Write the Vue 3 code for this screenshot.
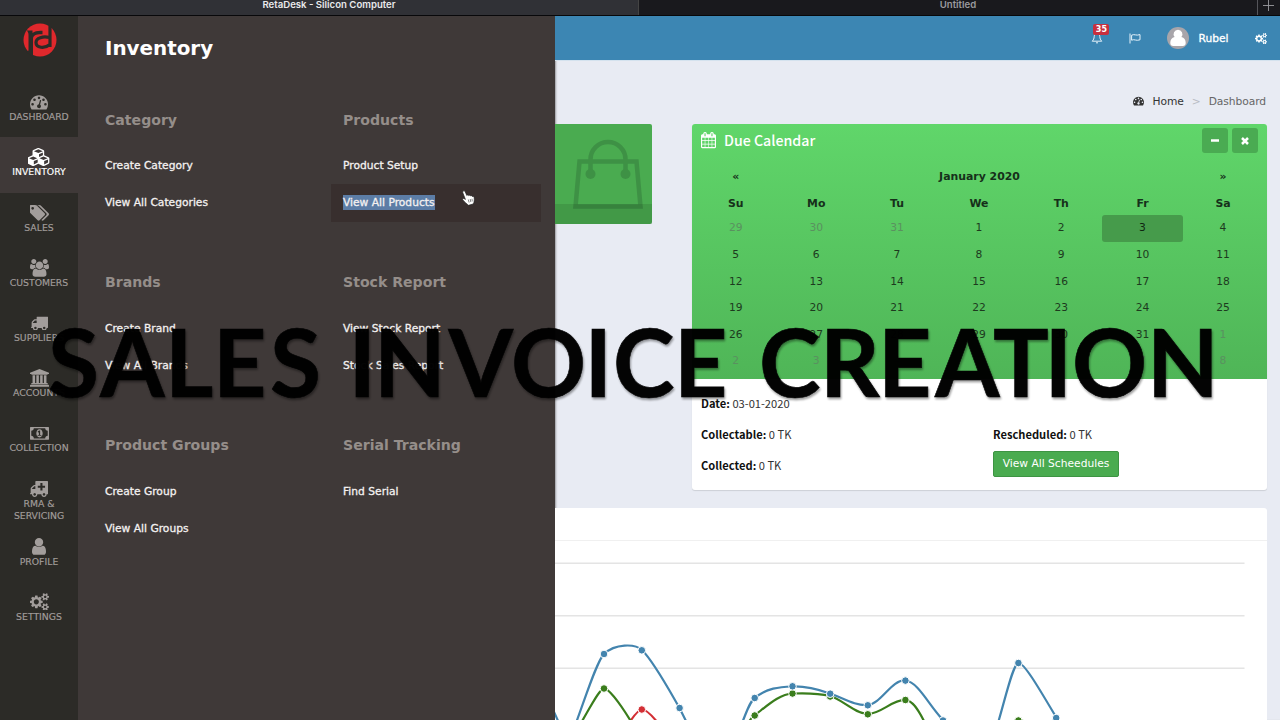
<template>
    <div class="screen">
        <!-- Browser tabs -->
        <div class="tabs">
            <div class="tab tab-active">RetaDesk - Silicon Computer</div>
            <div class="tab">Untitled</div>
            <div class="tab-add">
                <svg viewBox="0 0 12 12"><path d="M6 0v12M0 6h12" /></svg>
            </div>
        </div>

        <div class="app">
            <!-- Sidebar -->
            <aside class="sidebar">
                <div class="logo">
                    <svg viewBox="0 0 34 34">
                        <circle cx="17" cy="17" r="16.500" fill="#e0282c" />
                        <path
                            d="M3.500 7.500h6v2.500c2.500-2 5.500-2.600 10-2.300v3.600c-6-.3-9.500 1-9.500 4.700V34L3.500 29l2-1.500V12c0-2-.5-3.500-2-4.500z"
                            fill="#2c2b27"
                        />
                        <path
                            d="M27 3v21M26.500 14.500c-6.500-1.500-13.500.3-13.500 5 0 5.500 8.500 6.500 14 2"
                            fill="none"
                            stroke="#2c2b27"
                            stroke-width="3.200"
                        />
                    </svg>
                </div>
                <nav>
                    <a
                        v-for="item in menu"
                        :key="item.label"
                        class="nav-item"
                        :class="{ active: item.active, tall: item.tall }"
                    >
                        <span class="nav-icon">
                            <svg
                                :viewBox="icons[item.icon].box"
                                :style="{ width: item.w + 'px' }"
                            >
                                <path :d="icons[item.icon].d" />
                            </svg>
                        </span>
                        <span class="nav-label">{{ item.label }}</span>
                    </a>
                </nav>
            </aside>

            <!-- Inventory submenu -->
            <section class="panel">
                <h1>Inventory</h1>
                <div class="groups">
                    <div v-for="group in groups" :key="group.title" class="group">
                        <h2>{{ group.title }}</h2>
                        <a
                            v-for="link in group.links"
                            :key="link"
                            class="link"
                            :class="{ hovered: link === hovered }"
                        >
                            <span>{{ link }}</span>
                        </a>
                    </div>
                </div>
            </section>

            <!-- Main content -->
            <main class="main">
                <header class="topbar">
                    <span class="bell">
                        <svg viewBox="0 0 12 12">
                            <path d="M1.200 9.200h9.600C9.300 7.800 9 6.500 8.800 4.500 8.600 2.600 7.600 1.400 6 1.400S3.400 2.600 3.200 4.500C3 6.500 2.700 7.800 1.200 9.200zM5 10.800h2M6 .3v1" />
                        </svg>
                        <b>35</b>
                    </span>
                    <span class="flag">
                        <svg viewBox="0 0 12 11">
                            <path d="M1 .5v10M2.600 2.200c3-1.600 4.300.9 8.400-.6v5.200c-4.100 1.500-5.400-1.100-8.400.4z" />
                        </svg>
                    </span>
                    <span class="avatar">
                        <svg viewBox="0 0 22 22">
                            <circle cx="11" cy="11" r="11" fill="#a8a5aa" />
                            <path
                                d="M11 2.800a4.400 4.400 0 0 1 3.400 7.200c2.800.7 4.300 2.800 4.300 6 0 2-1 3-3 3H6.300c-2 0-3-1-3-3 0-3.200 1.500-5.300 4.300-6A4.400 4.400 0 0 1 11 2.800z"
                                fill="#fff"
                            />
                        </svg>
                    </span>
                    <span class="user">Rubel</span>
                    <svg class="cogs" :viewBox="icons.cogs.box">
                        <path :d="icons.cogs.d" />
                    </svg>
                </header>

                <div class="breadcrumb">
                    <svg :viewBox="icons.dashboard.box"><path :d="icons.dashboard.d" /></svg>
                    <span class="home">Home</span>
                    <span class="sep">&gt;</span>
                    <span>Dashboard</span>
                </div>

                <div class="row">
                    <div class="tile">
                        <svg viewBox="0 0 70 72">
                            <path d="M6.500 22.500h57l4 45h-65zM17.500 34V20.500a17.500 17.500 0 0 1 35 0V34" />
                            <circle cx="17.500" cy="35" r="5" />
                            <circle cx="52.500" cy="35" r="5" />
                        </svg>
                        <div class="tile-foot"></div>
                    </div>

                    <div class="card">
                        <div class="calendar">
                            <div class="cal-head">
                                <svg :viewBox="icons.calendar.box">
                                    <path :d="icons.calendar.d" />
                                </svg>
                                <span class="cal-title">Due Calendar</span>
                                <button>
                                    <svg viewBox="0 0 10 10"><path d="M1 4.500h8" /></svg>
                                </button>
                                <button>
                                    <svg viewBox="0 0 10 10"><path d="M2 2l6 6M8 2l-6 6" /></svg>
                                </button>
                            </div>
                            <div class="cal-grid">
                                <b>«</b>
                                <b class="month">January 2020</b>
                                <b>»</b>
                                <b v-for="d in weekdays" :key="d">{{ d }}</b>
                                <span
                                    v-for="(day, i) in days"
                                    :key="i"
                                    :class="{ muted: day.muted, today: day.today }"
                                    >{{ day.n }}</span
                                >
                            </div>
                        </div>
                        <div class="details">
                            <div class="full"><b>Date:</b> 03-01-2020</div>
                            <div><b>Collectable:</b> 0 TK</div>
                            <div><b>Rescheduled:</b> 0 TK</div>
                            <div><b>Collected:</b> 0 TK</div>
                            <a class="btn">View All Scheedules</a>
                        </div>
                    </div>
                </div>

                <div class="chart-card">
                    <div class="chart-head"></div>
                    <svg class="chart" viewBox="555 542 712 178">
                        <g class="grid-lines">
                            <path d="M555 563.300h689.500M555 615.800h689.500M555 668.300h689.500" />
                        </g>
                        <g v-for="line in series" :key="line.color">
                            <path :d="line.d" :stroke="line.color" fill="none" stroke-width="2.200" />
                            <circle
                                v-for="p in line.points"
                                :key="p[0]"
                                :cx="p[0]"
                                :cy="p[1]"
                                r="3.800"
                                :fill="line.color"
                                stroke="#fff"
                                stroke-width="1"
                            />
                        </g>
                    </svg>
                </div>
            </main>
        </div>

        <!-- Hand pointer -->
        <svg class="pointer" viewBox="0 0 13 16">
            <path
                d="M1 1.200c.9-.8 1.900-.2 2.300.8l1.500 3.500c.6-.8 1.500-.6 1.900.1.600-.6 1.500-.4 1.900.3.700-.5 1.600-.2 1.800.6 1-.3 1.700.2 1.800 1.200.2 2.300.1 4.500-1 6.300L6.500 15.300C5 14 2.500 12 .8 9.900c-.6-1 .4-1.900 1.600-1.100l1 .6L.8 2.800C.6 2.200.6 1.600 1 1.200z"
                fill="#fff"
                stroke="#222"
                stroke-width=".7"
            />
            <path d="M6.300 9.500l.8 3M8.200 9l.6 3M10 8.800l.3 2.600" stroke="#333" stroke-width=".6" />
        </svg>

        <!-- Video caption -->
        <svg class="caption" viewBox="0 0 1280 720">
            <text y="397" :x="captionX">SALES INVOICE CREATION</text>
        </svg>
    </div>
</template>

<script setup>
const icons = {
    dashboard: {
        box: "0 128 1792 1536",
        d: "M384 1152q0-53-37.500-90.500t-90.500-37.500-90.500 37.500-37.500 90.500 37.500 90.500 90.500 37.500 90.500-37.500 37.500-90.500zm192-448q0-53-37.500-90.500t-90.500-37.500-90.500 37.500-37.500 90.500 37.500 90.500 90.500 37.500 90.500-37.500 37.500-90.500zm428 481l101-382q6-26-7.500-48.500t-38.500-29.500-48 6.500-30 39.500l-101 382q-60 5-107 43.500t-63 98.500q-20 77 20 146t117 89 146-20 89-117q16-60-6-117t-72-91zm660-33q0-53-37.500-90.500t-90.500-37.500-90.500 37.500-37.500 90.500 37.500 90.500 90.500 37.500 90.500-37.500 37.500-90.500zm-640-640q0-53-37.500-90.500t-90.500-37.500-90.500 37.500-37.500 90.500 37.500 90.500 90.500 37.500 90.500-37.500 37.500-90.500zm448 192q0-53-37.500-90.500t-90.500-37.500-90.500 37.500-37.500 90.500 37.500 90.500 90.500 37.500 90.500-37.500 37.500-90.500zm320 448q0 261-141 483-19 29-54 29h-1402q-35 0-54-29-141-221-141-483 0-182 71-348t191-286 286-191 348-71 348 71 286 191 191 286 71 348z",
    },
    cubes: {
        box: "0 0 2176 1792",
        d: "M576 1632l384-192v-314l-384 164v342zm-64-454l404-173-404-173-404 173zm1088 454l384-192v-314l-384 164v342zm-64-454l404-173-404-173-404 173zm-448-293l384-165v-266l-384 164v267zm-64-379l441-189-441-189-441 189zm1088 518v416q0 36-19 67t-52 47l-448 224q-25 14-57 14t-57-14l-448-224q-4-2-7-4-2 2-7 4l-448 224q-25 14-57 14t-57-14l-448-224q-33-16-52-47t-19-67v-416q0-38 21.500-70t56.500-48l434-186v-400q0-38 21.500-70t56.500-48l448-192q23-10 50-10t50 10l448 192q35 16 56.500 48t21.500 70v400l434 186q36 16 57 48t21 70z",
    },
    tags: {
        box: "0 128 1835 1536",
        d: "M384 448q0-53-37.500-90.500t-90.500-37.500-90.500 37.500-37.500 90.500 37.500 90.500 90.500 37.500 90.500-37.500 37.500-90.500zm1067 576q0 53-37 90l-491 492q-39 37-91 37-53 0-90-37l-715-716q-38-37-64.500-101t-26.500-117v-416q0-52 38-90t90-38h416q53 0 117 26.500t102 64.500l715 714q37 39 37 91zm384 0q0 53-37 90l-491 492q-39 37-91 37-36 0-59-14t-53-45l470-470q37-37 37-90 0-52-37-91l-715-714q-38-38-102-64.500t-117-26.500h224q53 0 117 26.500t102 64.500l715 714q37 39 37 91z",
    },
    users: {
        box: "0 0 1920 1792",
        d: "M593 896q-162 5-265 128h-134q-82 0-138-40.500t-56-118.500q0-353 124-353 6 0 43.500 21t97.500 42.500 119 21.500q67 0 133-23-5 37-5 66 0 139 81 256zm1071 637q0 120-73 189.500t-194 69.500h-874q-121 0-194-69.500t-73-189.500q0-53 3.500-103.500t14-109 26.500-108.500 43-97.500 62-81 85.500-53.500 111.500-20q10 0 43 21.500t73 48 107 48 135 21.500 135-21.500 107-48 73-48 43-21.500q61 0 111.500 20t85.500 53.500 62 81 43 97.500 26.500 108.500 14 109 3.500 103.500zm-1024-1277q0 106-75 181t-181 75-181-75-75-181 75-181 181-75 181 75 75 181zm704 384q0 159-112.500 271.500t-271.500 112.500-271.500-112.500-112.500-271.500 112.500-271.500 271.500-112.500 271.500 112.500 112.500 271.500zm576 225q0 78-56 118.500t-138 40.500h-134q-103-123-265-128 81-117 81-256 0-29-5-66 66 23 133 23 59 0 119-21.500t97.500-42.500 43.500-21q124 0 124 353zm-128-609q0 106-75 181t-181 75-181-75-75-181 75-181 181-75 181 75 75 181z",
    },
    truck: {
        box: "64 192 1728 1472",
        d: "M640 1408q0-52-38-90t-90-38-90 38-38 90 38 90 90 38 90-38 38-90zm-384-512h384v-256h-158q-13 0-22 9l-195 195q-9 9-9 22v30zm1280 512q0-52-38-90t-90-38-90 38-38 90 38 90 90 38 90-38 38-90zm256-1088v1024q0 15-4 26.500t-13.500 18.500-16.500 11.500-23.500 6-22.500 2-25.500 0-22.500-.5q0 106-75 181t-181 75-181-75-75-181h-384q0 106-75 181t-181 75-181-75-75-181h-64q-3 0-22.500.5t-25.500 0-22.500-2-23.500-6-16.500-11.500-13.500-18.500-4-26.500q0-26 19-45t45-19v-320q0-8-.5-35t0-38 2.500-34.500 6.500-37 14-30.500 22.500-30l198-198q19-19 50.500-32t58.500-13h160v-192q0-26 19-45t45-19h1024q26 0 45 19t19 45z",
    },
    bank: {
        box: "0 0 1920 1792",
        d: "M960 0l960 384v128h-128q0 26-20.500 45t-48.500 19h-1526q-28 0-48.500-19t-20.500-45h-128v-128zm-704 640h256v768h128v-768h256v768h128v-768h256v768h128v-768h256v768h59q28 0 48.500 19t20.500 45v64h-1664v-64q0-26 20.500-45t48.500-19h59v-768zm1595 960q28 0 48.500 19t20.500 45v128h-1920v-128q0-26 20.500-45t48.500-19h1782z",
    },
    money: {
        box: "0 256 1920 1280",
        d: "M768 1152h384v-96h-128v-448h-114l-148 137 77 80q42-37 55-57h2v288h-128v96zm512-256q0 70-21 142t-59.500 134-101.500 101-138 39-138-39-101.500-101-59.500-134-21-142 21-142 59.500-134 101.500-101 138-39 138 39 101.500 101 59.500 134 21 142zm512 256v-512q-106 0-181-75t-75-181h-1152q0 106-75 181t-181 75v512q106 0 181 75t75 181h1152q0-106 75-181t181-75zm128-832v1152q0 26-19 45t-45 19h-1792q-26 0-45-19t-19-45v-1152q0-26 19-45t45-19h1792q26 0 45 19t19 45z",
    },
    ambulance: {
        box: "64 128 1728 1536",
        d: "M640 1408q0-52-38-90t-90-38-90 38-38 90 38 90 90 38 90-38 38-90zm-384-512h320v-256h-94q-13 0-22 9l-195 195q-9 9-9 22v30zm1280 512q0-52-38-90t-90-38-90 38-38 90 38 90 90 38 90-38 38-90zm256-1216v1152q0 15-4 26.500t-13.500 18.500-16.500 11.500-23.500 6-22.500 2-25.500 0-22.500-.5q0 106-75 181t-181 75-181-75-75-181h-384q0 106-75 181t-181 75-181-75-75-181h-64q-3 0-22.500.5t-25.500 0-22.500-2-23.500-6-16.500-11.500-13.500-18.500-4-26.500q0-26 19-45t45-19v-320q0-8-.5-35t0-38 2.500-34.500 6.500-37 14-30.500 22.500-30l198-198q19-19 50.500-32t58.500-13h96v-320q0-26 19-45t45-19h1088q26 0 45 19t19 45zM1060 330h200v250h250v200h-250v250h-200v-250h-250v-200h250z",
    },
    user: {
        box: "256 128 1280 1536",
        d: "M1536 1399q0 109-62.500 187t-150.500 78h-854q-88 0-150.500-78t-62.500-187q0-85 8.500-160.500t31.500-152 58.500-131 94-89 134.500-34.500q131 128 313 128t313-128q76 0 134.500 34.500t94 89 58.500 131 31.500 152 8.500 160.500zm-256-887q0 159-112.500 271.500t-271.500 112.500-271.500-112.500-112.500-271.500 112.500-271.500 271.500-112.500 271.500 112.500 112.500 271.500z",
    },
    cogs: {
        box: "0 128 1920 1760",
        d: "M896 1024q0-106-75-181t-181-75-181 75-75 181 75 181 181 75 181-75 75-181zm768 512q0-52-38-90t-90-38-90 38-38 90q0 53 37.500 90.500t90.500 37.500 90.500-37.500 37.500-90.500zm0-1024q0-52-38-90t-90-38-90 38-38 90q0 53 37.500 90.500t90.500 37.500 90.500-37.500 37.500-90.500zm-384 421v185q0 10-7 19.500t-16 10.500l-155 24q-11 35-32 76 34 48 90 115 7 11 7 20 0 12-7 19-23 30-82.500 89.500t-78.500 59.500q-11 0-21-7l-115-90q-37 19-77 31-11 108-23 155-7 24-30 24h-186q-11 0-20-7.500t-10-17.500l-23-153q-34-10-75-31l-118 89q-7 7-20 7-11 0-21-8-144-133-144-160 0-9 7-19 10-14 41-53t47-61q-23-44-35-82l-152-24q-10-1-17-9.500t-7-19.500v-185q0-10 7-19.500t16-10.500l155-24q11-35 32-76-34-48-90-115-7-11-7-20 0-12 7-20 22-30 82-89t79-59q11 0 21 7l115 90q34-18 77-32 11-108 23-154 7-24 30-24h186q11 0 20 7.500t10 17.500l23 153q34 10 75 31l118-89q8-7 20-7 11 0 21 8 144 133 144 160 0 8-7 19-12 16-42 54t-45 60q23 48 34 82l152 23q10 2 17 10.500t7 19.500zm640 533v140q0 16-149 31-12 27-30 52 51 113 51 138 0 4-4 7-122 71-124 71-8 0-46-47t-52-68q-20 2-30 2t-30-2q-14 21-52 68t-46 47q-2 0-124-71-4-3-4-7 0-25 51-138-18-25-30-52-149-15-149-31v-140q0-16 149-31 13-29 30-52-51-113-51-138 0-4 4-7 4-2 35-20t59-34 30-16q8 0 46 46.500t52 67.500q20-2 30-2t30 2q51-71 92-112l6-2q4 0 124 70 4 3 4 7 0 25-51 138 17 23 30 52 149 15 149 31zm0-1024v140q0 16-149 31-12 27-30 52 51 113 51 138 0 4-4 7-122 71-124 71-8 0-46-47t-52-68q-20 2-30 2t-30-2q-14 21-52 68t-46 47q-2 0-124-71-4-3-4-7 0-25 51-138-18-25-30-52-149-15-149-31v-140q0-16 149-31 13-29 30-52-51-113-51-138 0-4 4-7 4-2 35-20t59-34 30-16q8 0 46 46.500t52 67.500q20-2 30-2t30 2q51-71 92-112l6-2q4 0 124 70 4 3 4 7 0 25-51 138 17 23 30 52 149 15 149 31z",
    },
    calendar: {
        box: "64 0 1664 1792",
        d: "M192 1664h288v-288h-288v288zm352 0h320v-288h-320v288zm-352-352h288v-320h-288v320zm352 0h320v-320h-320v320zm-352-384h288v-288h-288v288zm736 736h320v-288h-320v288zm-384-736h320v-288h-320v288zm768 736h288v-288h-288v288zm-384-352h320v-320h-320v320zm-352-864v-288q0-13-9.500-22.500t-22.500-9.500h-64q-13 0-22.500 9.500t-9.500 22.500v288q0 13 9.500 22.500t22.500 9.500h64q13 0 22.500-9.500t9.500-22.500zm736 864h288v-320h-288v320zm-384-384h320v-288h-320v288zm384 0h288v-288h-288v288zm32-480v-288q0-13-9.500-22.500t-22.500-9.500h-64q-13 0-22.500 9.500t-9.500 22.500v288q0 13 9.500 22.500t22.500 9.500h64q13 0 22.500-9.500t9.500-22.500zm384-64v1280q0 52-38 90t-90 38h-1408q-52 0-90-38t-38-90v-1280q0-52 38-90t90-38h128v-96q0-66 47-113t113-47h64q66 0 113 47t47 113v96h384v-96q0-66 47-113t113-47h64q66 0 113 47t47 113v96h128q52 0 90 38t38 90z",
    },
};

const menu = [
    { label: "DASHBOARD", icon: "dashboard", w: 18 },
    { label: "INVENTORY", icon: "cubes", w: 22, active: true },
    { label: "SALES", icon: "tags", w: 19 },
    { label: "CUSTOMERS", icon: "users", w: 19 },
    { label: "SUPPLIERS", icon: "truck", w: 17 },
    { label: "ACCOUNTS", icon: "bank", w: 19 },
    { label: "COLLECTION", icon: "money", w: 19 },
    { label: "RMA & SERVICING", icon: "ambulance", w: 18, tall: true },
    { label: "PROFILE", icon: "user", w: 14 },
    { label: "SETTINGS", icon: "cogs", w: 19 },
];

const hovered = "View All Products";
const groups = [
    { title: "Category", links: ["Create Category", "View All Categories"] },
    { title: "Products", links: ["Product Setup", "View All Products"] },
    { title: "Brands", links: ["Create Brand", "View All Brands"] },
    { title: "Stock Report", links: ["View Stock Report", "Stock Sales Report"] },
    { title: "Product Groups", links: ["Create Group", "View All Groups"] },
    { title: "Serial Tracking", links: ["Find Serial"] },
];

const weekdays = ["Su", "Mo", "Tu", "We", "Th", "Fr", "Sa"];

// six weeks starting on Sunday 29 December 2019
const days = Array.from({ length: 42 }, (_, i) => {
    if (i < 3) return { n: 29 + i, muted: true };
    if (i > 33) return { n: i - 33, muted: true };
    return { n: i - 2, today: i === 5 };
});

const series = [
    {
        color: "#d32f35",
        d: "M629 723C635 714 639 709.500 642 709.500S650 713 658 723",
        points: [[641.8, 709.5]],
    },
    {
        color: "#3a7d1c",
        d: "M581 723C592 704 600 688.500 604 688.500S618 700 632 723M748 723C752 717 754 715 755 715C768 705 780 694 792.500 693.500S818 693 830 696S855 714 868 714S893 699 905.500 700C912 700 918 709 925 723M1010 723C1014 720 1022 719 1027 723",
        points: [
            [604, 688.5],
            [754.7, 715.5],
            [792.5, 693.5],
            [830.2, 696.5],
            [867.8, 714.3],
            [905.4, 700],
            [1018.4, 720.5],
        ],
    },
    {
        color: "#4384ae",
        d: "M554 712L559 723M576 723C586 696 597 661 604 654C615 643.500 635 643.500 642 650C654 662 668 688 679.500 708L687 723M742 723C747 711 750 701 755 698C766 688 780 687 792.500 686.500S817 689 830 693.500S855 706 868 705S892 679 905.500 680.500S930 708 946 723M998 723C1006 696 1013 664 1018.400 663S1040 690 1056 717L1060 723",
        points: [
            [604, 654],
            [641.8, 650.3],
            [679.6, 708],
            [754.7, 698],
            [792.5, 686.3],
            [830.2, 693.7],
            [867.8, 705.3],
            [905.4, 680.6],
            [943, 720.5],
            [1018.4, 663],
            [1056.2, 718],
        ],
    },
];

// one x per caption character, spaces included
const captionX = [
    48, 100, 165, 213, 270, 320, 348.5, 374, 448.5, 511, 584.5, 613, 674, 730, 759, 820,
    878, 935, 993, 1044.5, 1072, 1147,
].join(" ");
</script>

<style>
body {
    margin: 0;
    overflow: hidden;
}
</style>

<style scoped>
.screen {
    position: relative;
    display: flex;
    flex-direction: column;
    width: 1280px;
    height: 720px;
    overflow: hidden;
    background: #e8ebf3;
    font-family: "DejaVu Sans", sans-serif;
    font-size: 10.7px;
    color: #333;
}
svg {
    display: block;
}

/* browser tabs */
.tabs {
    display: flex;
    flex: none;
    height: 15px;
    border-bottom: 1px solid #08080a;
    background: #19191d;
    font: 600 9.6px/10px Inter, sans-serif;
    color: #9b9b9f;
}
.tab {
    width: 618px;
    padding-left: 20px;
    box-sizing: border-box;
    text-align: center;
}
.tab-active {
    width: 639px;
    border-right: 1px solid #444;
    background: #303136;
    color: #e9e9ec;
}
.tab-add {
    flex: 1;
    border-left: 1px solid #55555a;
    padding: 0 0 0 5px;
}
.tab-add svg {
    width: 11px;
    height: 11px;
    stroke: #98989c;
}

.app {
    display: flex;
    flex: 1;
    min-height: 0;
}

/* sidebar */
.sidebar {
    flex: none;
    width: 78px;
    background: #2c2b27;
}
.logo {
    height: 59.2px;
    padding: 7px 0 0 22.500px;
}
.logo svg {
    width: 34px;
    height: 34px;
}
.nav-item {
    display: flex;
    flex-direction: column;
    align-items: center;
    box-sizing: border-box;
    height: 55.2px;
    padding-top: 12px;
    color: #a29d9b;
}
.nav-item.tall {
    height: 58px;
}
.nav-item.active {
    background: #3f3938;
    color: #fff;
}
.nav-icon {
    display: flex;
    align-items: center;
    height: 16px;
    margin-bottom: 1px;
}
.nav-icon svg path {
    fill: currentColor;
    fill-rule: evenodd;
}
.nav-label {
    width: 70px;
    text-align: center;
    font-size: 9.3px;
    line-height: 12.500px;
    -webkit-text-stroke: 0.15px currentColor;
}

/* submenu */
.panel {
    flex: none;
    box-sizing: border-box;
    width: 477px;
    padding: 0 14px 0 15px;
    background: #3f3938;
    color: #f4f1f0;
}
.panel h1 {
    margin: 0 0 43.5px 12px;
    padding: 21px 0 3px;
    font-size: 19.9px;
    line-height: 24px;
    color: #fff;
}
.groups {
    display: grid;
    grid-template-columns: 210px 210px;
    grid-auto-rows: 162.800px;
    column-gap: 28px;
}
.group h2 {
    margin: 0 0 15.500px 12px;
    font-size: 14.1px;
    line-height: 25px;
    height: 24px;
    color: #958e8a;
}
.link {
    display: flex;
    align-items: center;
    height: 37.3px;
    padding-left: 12px;
    -webkit-text-stroke: 0.3px #f4f1f0;
}
.link.hovered {
    background: #382f2e;
}
.link.hovered span {
    padding: 1px 0;
    background: #5c7da6;
}

/* main */
.main {
    flex: 1;
    min-width: 0;
    box-shadow: inset 2px 0 2px -1px #9a9a9e;
}
.topbar {
    display: flex;
    align-items: center;
    justify-content: flex-end;
    height: 44px;
    padding-right: 13px;
    border-bottom: 1px solid #d4e2ee;
    background: #3c86b3;
    color: #fff;
}
.bell {
    position: relative;
    margin-right: 26px;
}
.bell svg,
.flag svg {
    width: 12px;
    fill: none;
    stroke: #e6f3fb;
    stroke-width: 1;
}
.bell b {
    position: absolute;
    top: -8px;
    left: 2px;
    width: 16px;
    background: #c9303e;
    font-size: 8px;
    line-height: 11px;
    text-align: center;
    border-radius: 2px;
}
.flag {
    margin-right: 26px;
}
.avatar svg {
    width: 22px;
}
.user {
    margin: 0 26.5px 0 9px;
    -webkit-text-stroke: 0.3px #fff;
}
.cogs {
    width: 12px;
    fill: #fff;
}

.breadcrumb {
    display: flex;
    align-items: center;
    justify-content: flex-end;
    height: 63px;
    padding: 17px 14px 0 0;
    box-sizing: border-box;
    color: #666;
}
.breadcrumb svg {
    width: 11px;
    fill: #333;
}
.home {
    margin-left: 8px;
    color: #333;
}
.sep {
    margin: 0 8px;
    color: #b9bcc4;
}
.breadcrumb span {
    letter-spacing: -0.07px;
}

.row {
    display: flex;
    justify-content: space-between;
    align-items: flex-start;
    padding-right: 13px;
}
.tile {
    display: flex;
    flex-direction: column;
    align-items: flex-end;
    width: 97px;
    height: 100px;
    border-radius: 0 2px 2px 0;
    background: #4aab50;
}
.tile svg {
    width: 70px;
    height: 72px;
    margin: 15px 9px -7px 0;
    fill: none;
    stroke: #3e9145;
    stroke-width: 4.500;
}
.tile circle {
    fill: #3e9145;
    stroke: none;
}
.tile-foot {
    width: 100%;
    height: 20px;
    background: rgba(0, 0, 0, 0.1);
}

.card {
    width: 575px;
    height: 366px;
    border-radius: 3px;
    background: #fff;
    box-shadow: 0 1px 1px rgba(0, 0, 0, 0.12);
}
.calendar {
    height: 254.5px;
    border-radius: 3px 3px 0 0;
    background: linear-gradient(#60d66a, #4fb557);
    color: #1d3a1e;
}
.cal-head {
    display: flex;
    align-items: center;
    height: 33px;
    padding: 0 9.500px 5px 9px;
    gap: 4px;
}
.cal-head > svg {
    width: 15px;
    fill: #fff;
}
.cal-title {
    flex: 1;
    margin-left: 4px;
    font: 500 14.2px/18px "Noto Sans CJK SC", sans-serif;
    color: #fff;
    padding-bottom: 2px;
}
.cal-head button {
    display: grid;
    place-items: center;
    width: 26px;
    height: 25px;
    padding: 0;
    border: 0;
    border-radius: 3px;
    background: #4aab52;
}
.cal-head button svg {
    width: 10px;
    stroke: #fff;
    stroke-width: 2.500;
}
.cal-grid {
    display: grid;
    grid-template-columns: 80.5px 80.5px 81px 83px 81.5px 81px 80px;
    grid-auto-rows: 26.650px;
    margin-left: 3.5px;
    line-height: 25px;
    text-align: center;
}
.cal-grid b {
    font-size: 10.9px;
    line-height: 29px;
    color: #16301a;
}
.cal-grid .month {
    grid-column: span 5;
}
.cal-grid .muted {
    color: #5a9160;
}
.cal-grid .today {
    border-radius: 3px;
    background: #469b4b;
    color: #0f2411;
}
.details {
    display: grid;
    grid-template-columns: 292px 1fr;
    grid-auto-rows: 31px;
    align-items: start;
    padding: 9px 9px;
    font: 11.15px/31px "Noto Sans CJK SC", sans-serif;
    color: #333;
}
.details .full {
    grid-column: span 2;
}
.details b {
    color: #111;
}
.btn {
    box-sizing: border-box;
    width: 126px;
    height: 26px;
    margin-top: 1px;
    border: 1px solid #3d9443;
    border-radius: 2px;
    background: #4aab50;
    font: 10.7px/24px "DejaVu Sans", sans-serif;
    text-align: center;
    color: #fff;
}

.chart-card {
    height: 212px;
    margin: 18px 13px 0 0;
    border-radius: 0 3px 0 0;
    background: #fff;
}
.chart-head {
    height: 32px;
    margin-bottom: 1px;
    border-bottom: 1px solid #f0f0f0;
}
.chart {
    width: 712px;
    height: 178px;
}
.grid-lines path {
    stroke: #e4e4e4;
    stroke-width: 1.600;
}

.pointer {
    position: absolute;
    left: 462px;
    top: 190px;
    width: 13px;
    height: 16px;
    fill: none;
}
.caption {
    position: absolute;
    inset: 0;
    width: 1280px;
    height: 720px;
    font: 700 93px Lato, sans-serif;
    stroke: #000;
    stroke-width: 0.6px;
    opacity: 0.98;
    filter: drop-shadow(1.5px 2px 1px rgba(0, 0, 0, 0.4));
}
</style>
